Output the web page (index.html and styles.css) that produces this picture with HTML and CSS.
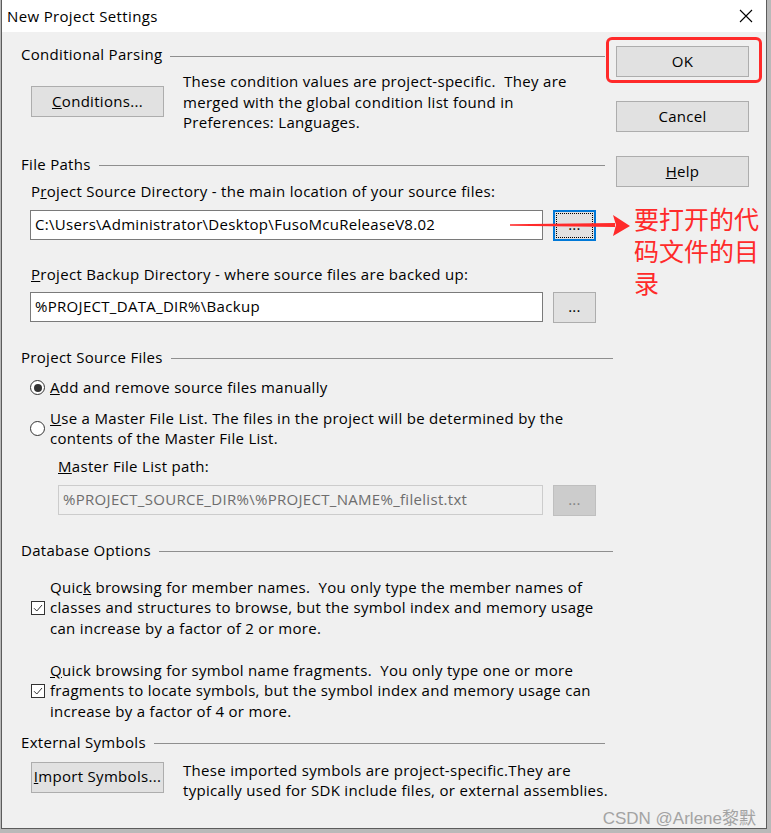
FILE: index.html
```html
<!DOCTYPE html>
<html lang="en">
<head>
    <meta charset="UTF-8">
    <title>New Project Settings</title>
    <link rel="stylesheet" href="styles.css">
</head>
<body>
    <div class="window">
        <div class="titlebar">
            <span class="title">New Project Settings</span>
            <svg class="close" width="14" height="14" viewBox="0 0 14 14">
                <path d="M1 1 L13 13 M13 1 L1 13" stroke="#000" stroke-width="1.1" fill="none"/>
            </svg>
        </div>

        <div class="dialog">
            <div class="main">
                <div class="group-title">Conditional Parsing</div>
                <div class="info-row">
                    <button class="btn btn-wide"><u>C</u>onditions...</button>
                    <p class="note">These condition values are project-specific.&nbsp; They are<br>merged with the global condition list found in<br>Preferences: Languages.</p>
                </div>

                <div class="group-title group-paths">File Paths</div>
                <div class="field-label">P<u>r</u>oject Source Directory - the main location of your source files:</div>
                <div class="path-row">
                    <div class="textbox">C:\Users\Administrator\Desktop\FusoMcuReleaseV8.02</div>
                    <button class="btn btn-browse focused"><span>...</span></button>
                </div>
                <div class="field-label label-backup"><u>P</u>roject Backup Directory - where source files are backed up:</div>
                <div class="path-row path-backup">
                    <div class="textbox">%PROJECT_DATA_DIR%\Backup</div>
                    <button class="btn btn-browse"><span>...</span></button>
                </div>

                <div class="group-title group-long group-sources">Project Source Files</div>
                <div class="option option-first">
                    <span class="radio checked"></span>
                    <span class="option-text"><u>A</u>dd and remove source files manually</span>
                </div>
                <div class="option option-second">
                    <span class="radio"></span>
                    <span class="option-text"><u>U</u>se a Master File List. The files in the project will be determined by the<br>contents of the Master File List.</span>
                </div>
                <div class="field-label label-master"><u>M</u>aster File List path:</div>
                <div class="path-row path-master">
                    <div class="textbox disabled">%PROJECT_SOURCE_DIR%\%PROJECT_NAME%_filelist.txt</div>
                    <button class="btn btn-browse disabled"><span>...</span></button>
                </div>

                <div class="group-title group-long group-db">Database Options</div>
                <div class="option check-first">
                    <span class="checkbox">
                        <svg width="12" height="12" viewBox="0 0 12 12"><path d="M2 6.2 L4.8 9 L10 3" stroke="#333" stroke-width="1" fill="none"/></svg>
                    </span>
                    <span class="option-text">Quic<u>k</u> browsing for member names.&nbsp; You only type the member names of<br>classes and structures to browse, but the symbol index and memory usage<br>can increase by a factor of 2 or more.</span>
                </div>
                <div class="option check-second">
                    <span class="checkbox">
                        <svg width="12" height="12" viewBox="0 0 12 12"><path d="M2 6.2 L4.8 9 L10 3" stroke="#333" stroke-width="1" fill="none"/></svg>
                    </span>
                    <span class="option-text"><u>Q</u>uick browsing for symbol name fragments.&nbsp; You only type one or more<br>fragments to locate symbols, but the symbol index and memory usage can<br>increase by a factor of 4 or more.</span>
                </div>

                <div class="group-title group-external">External Symbols</div>
                <div class="info-row info-import">
                    <button class="btn btn-wide"><u>I</u>mport Symbols...</button>
                    <p class="note">These imported symbols are project-specific.They are<br>typically used for SDK include files, or external assemblies.</p>
                </div>
            </div>

            <div class="actions">
                <button class="btn btn-action">OK</button>
                <button class="btn btn-action">Cancel</button>
                <button class="btn btn-action"><u>H</u>elp</button>
            </div>
        </div>

        <!-- annotations drawn on top of the screenshot -->
        <div class="mark-ok"></div>
        <svg class="arrow" width="130" height="30" viewBox="0 0 130 30">
            <polygon points="3,9.2 108,8 108,12 3,10.8" fill="#ff2a2a"/>
            <polygon points="106,0 123,11 106,21 109,10" fill="#ff2a2a"/>
        </svg>
        <div class="note-red">要打开的代码文件的目录</div>
        <div class="watermark">CSDN @Arlene黎默</div>
    </div>
</body>
</html>
```

FILE: styles.css
```css
body {
    margin: 0;
    background-color: #b9b9b9;
    font-family: "Open Sans", "Noto Sans", sans-serif;
    font-size: 15px;
    letter-spacing: 0.3px;
    color: #000;
}

.window {
    position: relative;
    margin-left: 1px;
    width: 764px;
    height: 828px;
    border: 1px solid #5c5c5c;
    border-top: none;
    background-color: #f0f0f0;
}

.titlebar {
    height: 32px;
    background-color: #fff;
    display: flex;
    align-items: center;
    justify-content: space-between;
    padding: 0 13px 0 5px;
}

.title {
    font-size: 15px;
    letter-spacing: 0.35px;
    margin-top: -1px;
}

.close {
    margin-top: -1px;
}

.dialog {
    display: flex;
    padding: 12px 0 0 19px;
}

.main {
    width: 584px;
}

.group-title {
    display: flex;
    align-items: center;
    line-height: 20px;
    width: 584px;
}

.group-title::after {
    content: "";
    flex: 1;
    border-top: 1px solid #8f8f8f;
    margin-left: 8px;
    margin-top: 4px;
}

.group-long {
    width: 592px;
}

.group-paths {
    margin-top: 21px;
}

.group-sources {
    margin-top: 24px;
}

.group-db {
    margin-top: 24px;
}

.group-external {
    margin-top: 10.5px;
}

.info-row {
    display: flex;
    align-items: flex-start;
    margin-top: 7px;
    padding-left: 10px;
}

.info-row .btn {
    margin-top: 15px;
}

.info-import {
    margin-top: 8px;
}

.info-import .btn {
    margin-top: 2px;
}

.note {
    margin: 0 0 0 19px;
    line-height: 20.5px;
    white-space: nowrap;
}

.btn {
    font-family: inherit;
    font-size: 15px;
    letter-spacing: 0.3px;
    color: #000;
    background-color: #e1e1e1;
    border: 1px solid #adadad;
    padding: 0 0 2px;
    height: 31px;
    box-sizing: border-box;
    flex-shrink: 0;
}

.btn-wide {
    width: 133px;
}

.field-label {
    line-height: 20px;
    margin-top: 7px;
    padding-left: 10px;
}

.label-backup {
    margin-top: 23px;
}

.label-master {
    margin-top: 8px;
    padding-left: 37px;
}

.path-row {
    display: flex;
    align-items: flex-start;
    margin-top: 9px;
    padding-left: 9px;
}

.path-backup {
    margin-top: 8px;
}

.path-master {
    padding-left: 37px;
}

.textbox {
    width: 513px;
    height: 30px;
    box-sizing: border-box;
    border: 1px solid #7a7a7a;
    background-color: #fff;
    padding-left: 4px;
    line-height: 26px;
    white-space: nowrap;
    overflow: hidden;
}

.textbox.disabled {
    width: 485px;
    border-color: #cccccc;
    background-color: #f0f0f0;
    color: #6d6d6d;
}

.btn-browse {
    width: 43px;
    margin-left: 10px;
    line-height: 20px;
}

.btn-browse.focused {
    border: 2px solid #0078d7;
    padding: 1px;
}

.btn-browse.focused span {
    display: block;
    height: 100%;
    border: 1px dotted #000;
    box-sizing: border-box;
    line-height: 21px;
}

.btn-browse.disabled {
    background-color: #cccccc;
    border-color: #bfbfbf;
    color: #838383;
}

.option {
    display: flex;
    align-items: center;
    padding-left: 9px;
    line-height: 20px;
}

.option-first {
    margin-top: 10px;
}

.option-second {
    margin-top: 11px;
}

.check-first {
    margin-top: 17px;
}

.check-second {
    margin-top: 21.5px;
}

.check-first .option-text,
.check-second .option-text {
    line-height: 20.5px;
}

.option-text {
    margin-left: 5px;
    white-space: nowrap;
}

.radio {
    width: 15px;
    height: 15px;
    box-sizing: border-box;
    border: 1px solid #333;
    border-radius: 50%;
    background-color: #fff;
    display: flex;
    align-items: center;
    justify-content: center;
    flex-shrink: 0;
    margin-top: 2px;
}

.radio.checked::after {
    content: "";
    width: 8px;
    height: 8px;
    border-radius: 50%;
    background-color: #333;
}

.checkbox {
    width: 14px;
    height: 14px;
    box-sizing: border-box;
    border: 1px solid #333;
    background-color: #fff;
    display: flex;
    align-items: center;
    justify-content: center;
    flex-shrink: 0;
    margin-left: 1px;
    margin-top: 2px;
}

.actions {
    display: flex;
    flex-direction: column;
    gap: 24px;
    margin: 2px 0 0 11px;
}

.btn-action {
    width: 133px;
}

.mark-ok {
    position: absolute;
    left: 604px;
    top: 37px;
    width: 156px;
    height: 46px;
    box-sizing: border-box;
    border: 3px solid #ff2a2a;
    border-radius: 6px;
}

.arrow {
    position: absolute;
    left: 505px;
    top: 215px;
}

.note-red {
    position: absolute;
    left: 632px;
    top: 202px;
    width: 130px;
    font-family: "Noto Sans CJK SC", sans-serif;
    font-size: 25px;
    line-height: 32px;
    letter-spacing: 0;
    color: #ff2a2a;
}

.watermark {
    position: absolute;
    right: 10px;
    top: 804px;
    font-family: "Liberation Sans", "Noto Sans CJK SC", sans-serif;
    font-size: 17px;
    letter-spacing: 0;
    color: #a3a3a3;
}
```
